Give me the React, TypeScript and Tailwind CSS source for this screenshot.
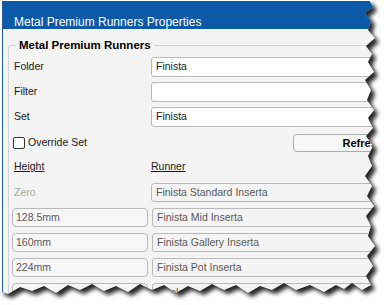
import React from "react";

const font = { fontFamily: '"Liberation Sans", Arial, sans-serif' };

// torn paper edge along the right and bottom of the capture
const rightEdge: [number, number][] = [
  [369, 0], [373, 7], [365, 13], [371, 21], [368, 30], [375, 38], [366, 46], [372, 54],
  [368, 62], [374, 72], [365, 80], [371, 90], [367, 100], [374, 110], [368, 118], [373, 128],
  [366, 136], [373, 146], [368, 156], [372, 166], [365, 176], [372, 186], [367, 196], [374, 206],
  [366, 216], [371, 226], [368, 236], [375, 246], [367, 256], [373, 266], [366, 276], [371, 285],
];
const bottomEdge: [number, number][] = [
  [362, 290], [352, 283], [344, 289], [336, 285], [324, 292], [310, 285], [296, 290], [284, 283],
  [272, 290], [260, 286], [248, 293], [236, 285], [224, 290], [212, 284], [200, 291], [188, 286],
  [176, 293], [164, 285], [152, 290], [140, 284], [128, 292], [116, 286], [104, 291], [92, 284],
  [80, 290], [68, 285], [56, 293], [44, 286], [32, 291], [20, 287], [8, 294], [0, 291],
];
const pagePath =
  "M0 0 L" + [...rightEdge, ...bottomEdge].map((p) => p.join(" ")).join(" L") + " Z";
const outside = "M0 0 H384 V305 H0 Z " + pagePath;

const TornEdge = () => (
  <svg className="absolute inset-0 pointer-events-none" width={384} height={305} viewBox="0 0 384 305">
    <defs>
      <clipPath id="out">
        <path d={outside} clipRule="evenodd" />
      </clipPath>
      <filter id="blur" x="-10%" y="-10%" width="120%" height="120%">
        <feGaussianBlur stdDeviation="2.2" />
      </filter>
    </defs>
    <path d={outside} fill="#fff" fillRule="evenodd" />
    <g clipPath="url(#out)">
      <path d={pagePath} transform="translate(4 4)" fill="#000" opacity="0.85" filter="url(#blur)" />
    </g>
  </svg>
);

const Field = ({ value, white }: { value?: string; white?: boolean }) => (
  <div
    className={`flex-1 h-[20px] flex items-center pl-[4px] rounded-[3px] border border-[#b9b9b9] text-[#1a1a1a] ${
      white ? "bg-white" : "bg-[#f4f4f4]"
    }`}
  >
    {value}
  </div>
);

const LabelRow = ({ label, value, white = true }: { label: string; value?: string; white?: boolean }) => (
  <div className="flex items-center h-[20px]">
    <span className="w-[140px] pl-[3px] text-[#1a1a1a]">{label}</span>
    <Field value={value} white={white} />
  </div>
);

const RunnerRow = ({ height, runner }: { height?: string; runner: string }) => (
  <div className="flex items-center h-[19px] mt-[6px] first:mt-0">
    {height === "Zero" ? (
      <span className="w-[140px] pl-[3px] text-[#a8a8a8]">Zero</span>
    ) : (
      <div className="w-[136px] mr-[4px] ml-[1px] h-[19px] flex items-center pl-[3px] rounded-[4px] border border-[#b9b9b9] bg-[#f6f6f6] text-[#5a5a5a]">
        {height}
      </div>
    )}
    <div className="flex-1 h-[19px] flex items-center pl-[4px] rounded-[3px] border border-[#b9b9b9] bg-[#f4f4f4] text-[#5a5a5a]">
      {runner}
    </div>
  </div>
);

export default function App() {
  return (
    <div className="relative w-[384px] h-[305px] overflow-hidden bg-white" style={font}>
      <div className="ml-[2px] mt-[1px] w-[430px] h-[320px] border-l border-[#1b5ea8] bg-[#f4f4f4] text-[10.5px]">
        <div className="h-[28px] bg-[#0c59a7] text-white text-[12px] leading-[14px] pt-[14px] pl-[11px]">
          Metal Premium Runners Properties
        </div>
        <fieldset className="ml-[5px] mt-[9px] w-[410px] h-[300px] border border-[#d3d3d3] rounded-[3px] px-[2px]">
          <legend className="ml-[5px] px-[3px] text-[11.5px] leading-[14px] font-bold text-black">
            Metal Premium Runners
          </legend>
          <div className="flex flex-col mt-[5px]">
            <div className="flex flex-col gap-[5px]">
              <LabelRow label="Folder" value="Finista" />
              <LabelRow label="Filter" />
              <LabelRow label="Set" value="Finista" />
            </div>
            <div className="flex items-center h-[18px] mt-[7px]">
              <div className="w-[282px] flex items-center gap-[3px] pl-[2px]">
                <span className="w-[12px] h-[12px] rounded-[2px] border border-[#333] bg-white" />
                <span className="text-[#1a1a1a]">Override Set</span>
              </div>
              <div className="w-[140px] h-[18px] rounded-[4px] border border-[#adadad] bg-[#f7f7f7] flex items-center justify-center text-[11px] font-bold text-black">
                Refresh
              </div>
            </div>
            <div className="flex items-center h-[14px] mt-[8px] text-[#1a1a1a]">
              <span className="w-[140px] pl-[3px] underline">Height</span>
              <span className="underline">Runner</span>
            </div>
            <div className="flex flex-col mt-[9px]">
              <RunnerRow height="Zero" runner="Finista Standard Inserta" />
              <RunnerRow height="128.5mm" runner="Finista Mid Inserta" />
              <RunnerRow height="160mm" runner="Finista Gallery Inserta" />
              <RunnerRow height="224mm" runner="Finista Pot Inserta" />
              <RunnerRow height="" runner="<Select>" />
            </div>
          </div>
        </fieldset>
      </div>
      <TornEdge />
    </div>
  );
}
